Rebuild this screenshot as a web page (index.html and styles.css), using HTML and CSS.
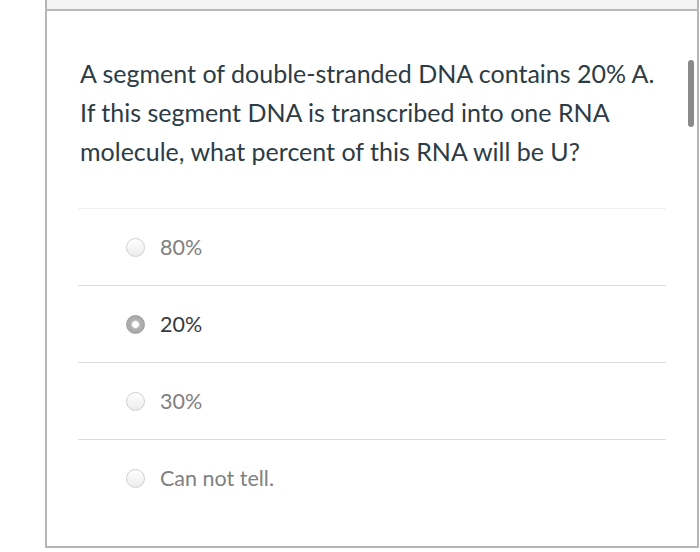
FILE: index.html
```html
<!DOCTYPE html>
<html>
<head>
<meta charset="utf-8">
<link rel="stylesheet" href="styles.css">
</head>
<body>
<div class="page">
  <div class="card">
    <div class="card-header"></div>
    <div class="card-body">
      <div class="question">A segment of double-stranded DNA contains 20% A. If this segment DNA is transcribed into one RNA molecule, what percent of this RNA will be U?</div>
      <div class="answers">
        <div class="answer first"><span class="radio"></span><span class="label">80%</span></div>
        <div class="answer selected"><span class="radio"></span><span class="label">20%</span></div>
        <div class="answer"><span class="radio"></span><span class="label">30%</span></div>
        <div class="answer"><span class="radio"></span><span class="label">Can not tell.</span></div>
      </div>
    </div>
  </div>
  <div class="scrollbar"></div>
</div>
</body>
</html>
```
FILE: styles.css
```css
html, body {
  margin: 0;
  padding: 0;
  background: #ffffff;
}
.page {
  position: relative;
  width: 700px;
  height: 552px;
  padding-left: 45px;
  box-sizing: border-box;
  font-family: Lato, "Open Sans", sans-serif;
}
.card {
  width: 654px;
  box-sizing: border-box;
  border-left: 2px solid #b5b5b5;
  border-right: 2px solid #b5b5b5;
  border-bottom: 2px solid #b5b5b5;
  background: #fff;
}
.card-header {
  height: 9px;
  background: #f3f3f3;
  border-bottom: 2px solid #b8b8b8;
}
.card-body {
  padding: 43px 31px 30px 31px;
}
.question {
  padding-left: 2px;
  font-size: 25px;
  line-height: 39px;
  color: #2d3b45;
  margin-bottom: 37px;
}
.answer {
  height: 76px;
  border-top: 1px solid #dcdcdc;
  display: flex;
  align-items: center;
  padding-left: 48px;
}
.answer.first {
  border-top-color: #efefef;
}
.radio {
  width: 19px;
  height: 19px;
  box-sizing: border-box;
  border-radius: 50%;
  border: 1px solid #d0d0d0;
  background: linear-gradient(#ffffff, #ececec);
  margin-right: 15px;
  flex: none;
  position: relative;
}
.selected .radio {
  border: 1px solid #a0a0a0;
  background: radial-gradient(circle, #ffffff 0, #ffffff 3px, #d0d0d0 3.5px, #b0b0b0 5px, #a5a5a5 9.5px);
}
.label {
  font-size: 21.5px;
  color: #808080;
}
.selected .label {
  color: #3a3a3a;
}
.scrollbar {
  position: absolute;
  left: 688px;
  top: 60px;
  width: 6px;
  height: 67px;
  border-radius: 3px;
  background: #8a8a8a;
}
```
